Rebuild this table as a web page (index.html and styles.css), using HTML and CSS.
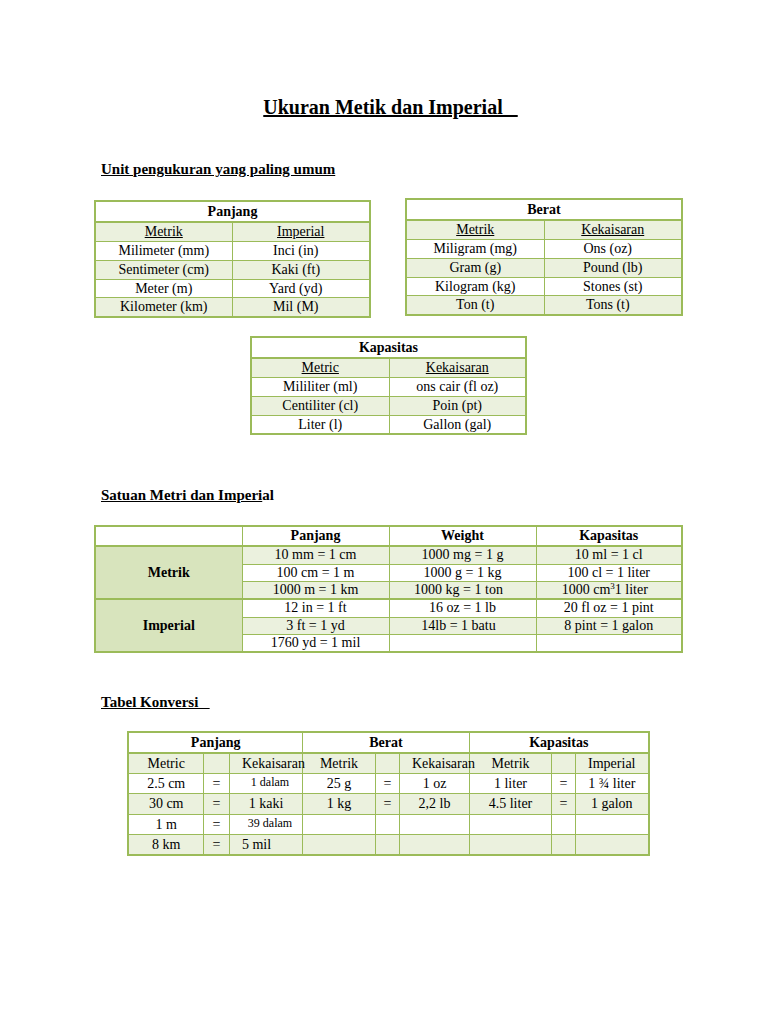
FILE: index.html
```html
<!DOCTYPE html>
<html lang="id">
<head>
<meta charset="utf-8">
<title>Ukuran Metik dan Imperial</title>
<link rel="stylesheet" href="styles.css">
</head>
<body>
<main class="page">
  <h1 class="title">Ukuran Metik dan Imperial&nbsp;&nbsp;&nbsp;</h1>

  <h2 class="heading h-first">Unit pengukuran yang paling umum</h2>

  <div class="pair">
    <table class="unit t-left">
      <colgroup><col class="c137"><col></colgroup>
      <tr class="head"><th colspan="2">Panjang</th></tr>
      <tr class="sub"><td><u>Metrik</u></td><td><u>Imperial</u></td></tr>
      <tr><td>Milimeter (mm)</td><td class="shift">Inci (in)</td></tr>
      <tr class="g"><td>Sentimeter (cm)</td><td class="shift">Kaki (ft)</td></tr>
      <tr><td>Meter (m)</td><td class="shift">Yard (yd)</td></tr>
      <tr class="g"><td>Kilometer (km)</td><td class="shift">Mil (M)</td></tr>
    </table>

    <table class="unit t-right">
      <colgroup><col class="c138"><col></colgroup>
      <tr class="head"><th colspan="2">Berat</th></tr>
      <tr class="sub"><td><u>Metrik</u></td><td><u>Kekaisaran</u></td></tr>
      <tr><td>Miligram (mg)</td><td class="shift">Ons (oz)</td></tr>
      <tr class="g"><td>Gram (g)</td><td>Pound (lb)</td></tr>
      <tr><td>Kilogram (kg)</td><td>Stones (st)</td></tr>
      <tr class="g"><td>Ton (t)</td><td class="shift">Tons (t)</td></tr>
    </table>
  </div>

  <table class="unit t-center">
    <colgroup><col class="c138"><col></colgroup>
    <tr class="head"><th colspan="2">Kapasitas</th></tr>
    <tr class="sub"><td><u>Metric</u></td><td><u>Kekaisaran</u></td></tr>
    <tr><td>Mililiter (ml)</td><td>ons cair (fl oz)</td></tr>
    <tr class="g"><td>Centiliter (cl)</td><td>Poin (pt)</td></tr>
    <tr><td>Liter (l)</td><td>Gallon (gal)</td></tr>
  </table>

  <h2 class="heading h-second"><u>Satuan Metri dan Imperi</u>al</h2>

  <table class="conv">
    <colgroup><col class="c147"><col class="c147"><col class="c147"><col></colgroup>
    <tr class="head"><th></th><th>Panjang</th><th>Weight</th><th>Kapasitas</th></tr>
    <tr class="g"><th class="side" rowspan="3">Metrik</th><td>10 mm = 1 cm</td><td>1000 mg = 1 g</td><td>10 ml = 1 cl</td></tr>
    <tr><td>100 cm = 1 m</td><td>1000 g = 1 kg</td><td>100 cl = 1 liter</td></tr>
    <tr class="g"><td>1000 m = 1 km</td><td class="shift-l">1000 kg = 1 ton</td><td class="shift-l">1000 cm<sup>3</sup>1 liter</td></tr>
    <tr class="top"><th class="side" rowspan="3">Imperial</th><td>12 in = 1 ft</td><td>16 oz = 1 lb</td><td>20 fl oz = 1 pint</td></tr>
    <tr class="g"><td>3 ft = 1 yd</td><td class="shift-l">14lb = 1 batu</td><td>8 pint = 1 galon</td></tr>
    <tr><td>1760 yd = 1 mil</td><td></td><td></td></tr>
  </table>

  <h2 class="heading h-third">Tabel Konversi&nbsp;&nbsp;&nbsp;</h2>

  <table class="tk">
    <colgroup>
      <col class="w75"><col class="w26"><col class="w73">
      <col class="w73"><col class="w24"><col class="w70">
      <col class="w82"><col class="w24"><col class="w73">
    </colgroup>
    <tr class="head"><th colspan="3">Panjang</th><th colspan="3">Berat</th><th colspan="3">Kapasitas</th></tr>
    <tr class="g sub"><td>Metric</td><td></td><td class="over">Kekaisaran</td><td>Metrik</td><td></td><td class="over">Kekaisaran</td><td>Metrik</td><td></td><td>Imperial</td></tr>
    <tr><td>2.5 cm</td><td>=</td><td class="small">1 dalam</td><td>25 g</td><td>=</td><td>1 oz</td><td>1 liter</td><td>=</td><td>1 ¾ liter</td></tr>
    <tr class="g"><td>30 cm</td><td>=</td><td>1 kaki</td><td>1 kg</td><td>=</td><td>2,2 lb</td><td>4.5 liter</td><td>=</td><td>1 galon</td></tr>
    <tr><td>1 m</td><td>=</td><td class="small">39 dalam</td><td></td><td></td><td></td><td></td><td></td><td></td></tr>
    <tr class="g"><td>8 km</td><td>=</td><td class="left">5 mil</td><td></td><td></td><td></td><td></td><td></td><td></td></tr>
  </table>
</main>
</body>
</html>
```

FILE: styles.css
```css
html, body {
  margin: 0;
  padding: 0;
  background: #ffffff;
}

body {
  font-family: "Liberation Serif", "Times New Roman", serif;
  color: #000000;
}

.page {
  width: 589px;
  margin-left: 94px;
  padding-top: 95px;
  padding-bottom: 40px;
  display: flex;
  flex-direction: column;
}

.title {
  margin: 0;
  font-size: 20px;
  line-height: 24px;
  font-weight: bold;
  text-align: center;
  text-decoration: underline;
  padding-left: 4px;
}

.heading {
  margin: 0 0 0 7px;
  font-size: 15px;
  line-height: 18px;
  font-weight: bold;
}

.h-first { margin-top: 41px; text-decoration: underline; }
.h-second { margin-top: 51px; }
.h-third { margin-top: 40px; text-decoration: underline; }

.heading u { text-decoration: underline; }

/* generic table look */
table {
  border-collapse: collapse;
  table-layout: fixed;
  font-size: 14px;
}

td, th {
  border: 1px solid #9bbb59;
  padding: 0;
  text-align: center;
  white-space: nowrap;
}

th { font-weight: bold; }

.g td { background: #ebf1de; }

/* first-section tables */
.pair {
  display: flex;
  justify-content: space-between;
  align-items: flex-start;
  margin-top: 20px;
}

.unit {
  border: 2px solid #9bbb59;
}

.t-left { width: 277px; margin-top: 2px; }
.t-right { width: 278px; }
.t-center { width: 277px; align-self: center; margin-top: 18px; }

.c137 { width: 137px; }
.c138 { width: 138px; }

.unit td, .unit th { line-height: 17.75px; }
.unit .head th { line-height: 19px; border-bottom-width: 2px; background: #ffffff; }
.unit .sub td { line-height: 18px; background: #ebf1de; }

.shift { padding-right: 10px; }

/* conversion overview */
.conv {
  width: 589px;
  margin-top: 21px;
  border: 2px solid #9bbb59;
}

.c147 { width: 147px; }

.conv td, .conv th { line-height: 16.33px; }
.conv .head th { line-height: 18px; border-bottom-width: 2px; background: #ffffff; }
.conv .side { background: #d8e4bd; }
.conv .top td, .conv .top th { border-top-width: 2px; }
.shift-l { padding-right: 8px; }

sup {
  font-size: 9px;
  line-height: 0;
  vertical-align: 5px;
}

/* tabel konversi */
.tk {
  width: 520px;
  align-self: center;
  margin-top: 20px;
  border: 2px solid #9bbb59;
}

.w75 { width: 75px; }
.w26 { width: 26px; }
.w73 { width: 73px; }
.w24 { width: 24px; }
.w70 { width: 70px; }
.w82 { width: 82px; }

.tk td, .tk th { line-height: 19.25px; overflow: visible; }
.tk .head th { line-height: 19px; border-bottom-width: 2px; background: #ffffff; }
.tk .sub td { line-height: 19px; }
.tk .over { text-align: left; padding-left: 12px; }
.tk .small { font-size: 12px; vertical-align: top; line-height: 16px; padding-left: 8px; }
.tk .left { text-align: left; padding-left: 12px; }
```
